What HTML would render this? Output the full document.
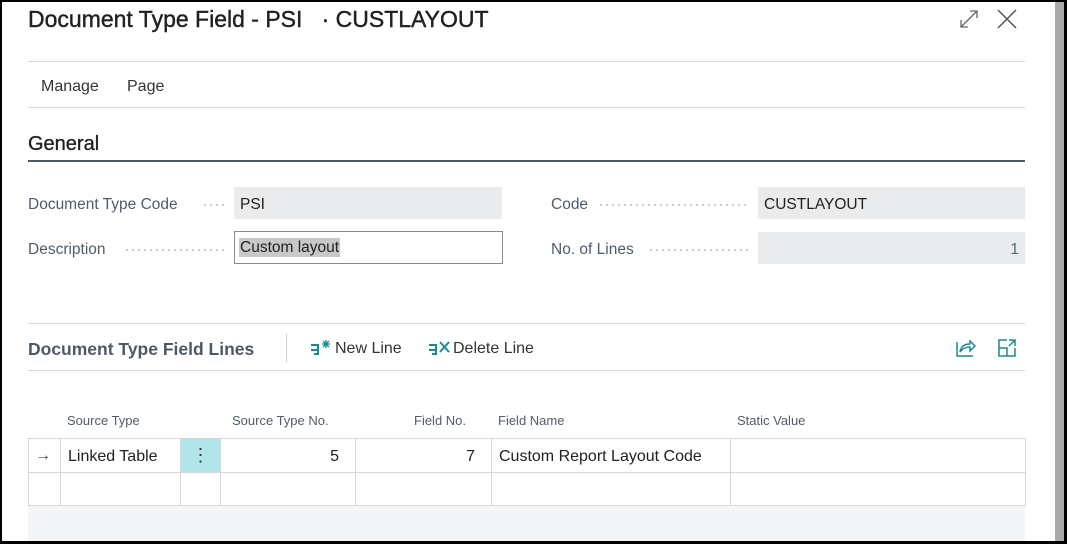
<!DOCTYPE html>
<html><head><meta charset="utf-8"><style>
*{margin:0;padding:0;box-sizing:border-box}
body{width:1067px;height:544px;overflow:hidden;background:#000;position:relative;font-family:"Liberation Sans",sans-serif}
#p{position:absolute;left:2px;top:2px;width:1053px;height:539px;background:#fff}
#g{position:absolute;left:1055px;top:2px;width:9px;height:539px;background:#a9a9a9}
.a{position:absolute;white-space:nowrap}
.ln{position:absolute;left:28px;width:997px;height:1px;background:#d8d8d8}
.lbl{color:#505c6b;font-size:15.5px}
.dots{position:absolute;height:2px;background:radial-gradient(circle,#b8bcc2 0.8px,transparent 1px) 0 0/6px 2px repeat-x}
.box{position:absolute;background:#eaebec;font-size:15.5px;color:#212121;padding:8px 6px}
.h{font-size:13px;color:#505c6b}
</style></head><body>
<div id="p"></div><div id="g"></div>
<div class="a" style="left:28px;top:6px;font-size:23px;color:#212121;-webkit-text-stroke:0.4px #212121">Document Type Field - PSI &nbsp; · CUSTLAYOUT</div>
<svg class="a" style="left:958px;top:8px" width="22" height="22" viewBox="0 0 22 22" fill="none" stroke="#666" stroke-width="1.3"><path d="M3 19L19 3M12 3h7v7M3 12v7h7"/></svg>
<svg class="a" style="left:996px;top:8px" width="22" height="22" viewBox="0 0 22 22" fill="none" stroke="#555" stroke-width="1.5"><path d="M2 2L20 20M20 2L2 20"/></svg>
<div class="ln" style="top:61px"></div>
<div class="a" style="left:41px;top:78px;font-size:16px;color:#333">Manage</div>
<div class="a" style="left:127px;top:78px;font-size:16px;color:#333">Page</div>
<div class="ln" style="top:107px"></div>
<div class="a" style="left:28px;top:133px;font-size:20px;color:#212121;-webkit-text-stroke:0.35px #212121">General</div>
<div class="ln" style="top:160px;height:2px;background:#4f5866"></div>

<div class="a lbl" style="left:28px;top:196px">Document Type Code</div>
<div class="dots" style="left:202px;width:26px;top:204px"></div>
<div class="box" style="left:234px;top:187px;width:268px;height:32px;padding-top:9px">PSI</div>
<div class="a lbl" style="left:28px;top:241px">Description</div>
<div class="dots" style="left:124px;width:104px;top:249px"></div>
<div class="box" style="left:234px;top:231px;width:269px;height:33px;background:#fff;border:1px solid #8a8a8a;padding:7px 4px"><span style="background:#c8c8c8;padding:1px 1px">Custom layout</span></div>

<div class="a lbl" style="left:551px;top:196px">Code</div>
<div class="dots" style="left:598px;width:150px;top:204px"></div>
<div class="box" style="left:758px;top:187px;width:267px;height:32px;padding-top:9px">CUSTLAYOUT</div>
<div class="a lbl" style="left:551px;top:241px">No. of Lines</div>
<div class="dots" style="left:648px;width:100px;top:249px"></div>
<div class="box" style="left:758px;top:232px;width:267px;height:32px;text-align:right;color:#4a6f7a;padding-top:9px">1</div>

<div class="ln" style="top:323px"></div>
<div class="a" style="left:28px;top:339px;font-size:17.5px;font-weight:bold;color:#505866">Document Type Field Lines</div>
<div class="a" style="left:286px;top:334px;width:1px;height:28px;background:#ccc"></div>
<svg class="a" style="left:310px;top:339px" width="22" height="18" viewBox="0 0 22 18" fill="none" stroke="#1d8a91" stroke-width="2"><path d="M1 6h7M1 11h7M4 15h4M8 5v11"/><path d="M13 2l6 6M19 2l-6 6M16 1v8M12 5h8" stroke-width="1.3"/></svg>
<div class="a" style="left:335px;top:340px;font-size:16px;color:#333">New Line</div>
<svg class="a" style="left:428px;top:339px" width="24" height="18" viewBox="0 0 24 18" fill="none" stroke="#1d8a91" stroke-width="2"><path d="M1 6h7M1 11h7M4 15h4M8 5v11M12 3l9 10M21 3l-9 10"/></svg>
<div class="a" style="left:453px;top:340px;font-size:16px;color:#333">Delete Line</div>
<svg class="a" style="left:955px;top:338px" width="22" height="20" viewBox="0 0 22 20" fill="none" stroke="#1d8a91" stroke-width="1.5"><path d="M2 4v14h16M5 14c1-6 5-8 10-8V3l5 5-5 5V9c-4 0-7 1-10 5z"/></svg>
<svg class="a" style="left:997px;top:338px" width="20" height="20" viewBox="0 0 20 20" fill="none" stroke="#1d8a91" stroke-width="1.5"><path d="M10 2H2v16h16v-8M2 10h8v8M12 2h6v6M18 2l-6 6"/></svg>
<div class="ln" style="top:370px"></div>

<div class="a h" style="left:67px;top:413px">Source Type</div>
<div class="a h" style="left:232px;top:413px">Source Type No.</div>
<div class="a h" style="left:414px;top:413px">Field No.</div>
<div class="a h" style="left:498px;top:413px">Field Name</div>
<div class="a h" style="left:737px;top:413px">Static Value</div>

<div class="a" style="left:28px;top:505px;width:997px;height:36px;background:#f4f5f6"></div>
<div class="a" style="left:28px;top:438px;width:998px;height:68px;border:1px solid #d6d6d6"></div>
<div class="a" style="left:28px;top:472px;width:997px;height:1px;background:#d6d6d6"></div>
<div class="a" style="left:60px;top:438px;width:1px;height:68px;background:#d6d6d6"></div>
<div class="a" style="left:180px;top:438px;width:1px;height:68px;background:#d6d6d6"></div>
<div class="a" style="left:220px;top:438px;width:1px;height:68px;background:#d6d6d6"></div>
<div class="a" style="left:355px;top:438px;width:1px;height:68px;background:#d6d6d6"></div>
<div class="a" style="left:491px;top:438px;width:1px;height:68px;background:#d6d6d6"></div>
<div class="a" style="left:730px;top:438px;width:1px;height:68px;background:#d6d6d6"></div>
<div class="a" style="left:181px;top:439px;width:39px;height:33px;background:#b2e5ea;text-align:center;font-size:18px;line-height:32px;color:#333">⋮</div>
<div class="a" style="left:35px;top:447px;font-size:16px;color:#444">→</div>
<div class="a" style="left:68px;top:448px;font-size:16px;color:#212121">Linked Table</div>
<div class="a" style="left:220px;top:448px;width:119px;text-align:right;font-size:16px;color:#212121">5</div>
<div class="a" style="left:355px;top:448px;width:120px;text-align:right;font-size:16px;color:#212121">7</div>
<div class="a" style="left:499px;top:448px;font-size:16px;color:#212121">Custom Report Layout Code</div>
</body></html>
